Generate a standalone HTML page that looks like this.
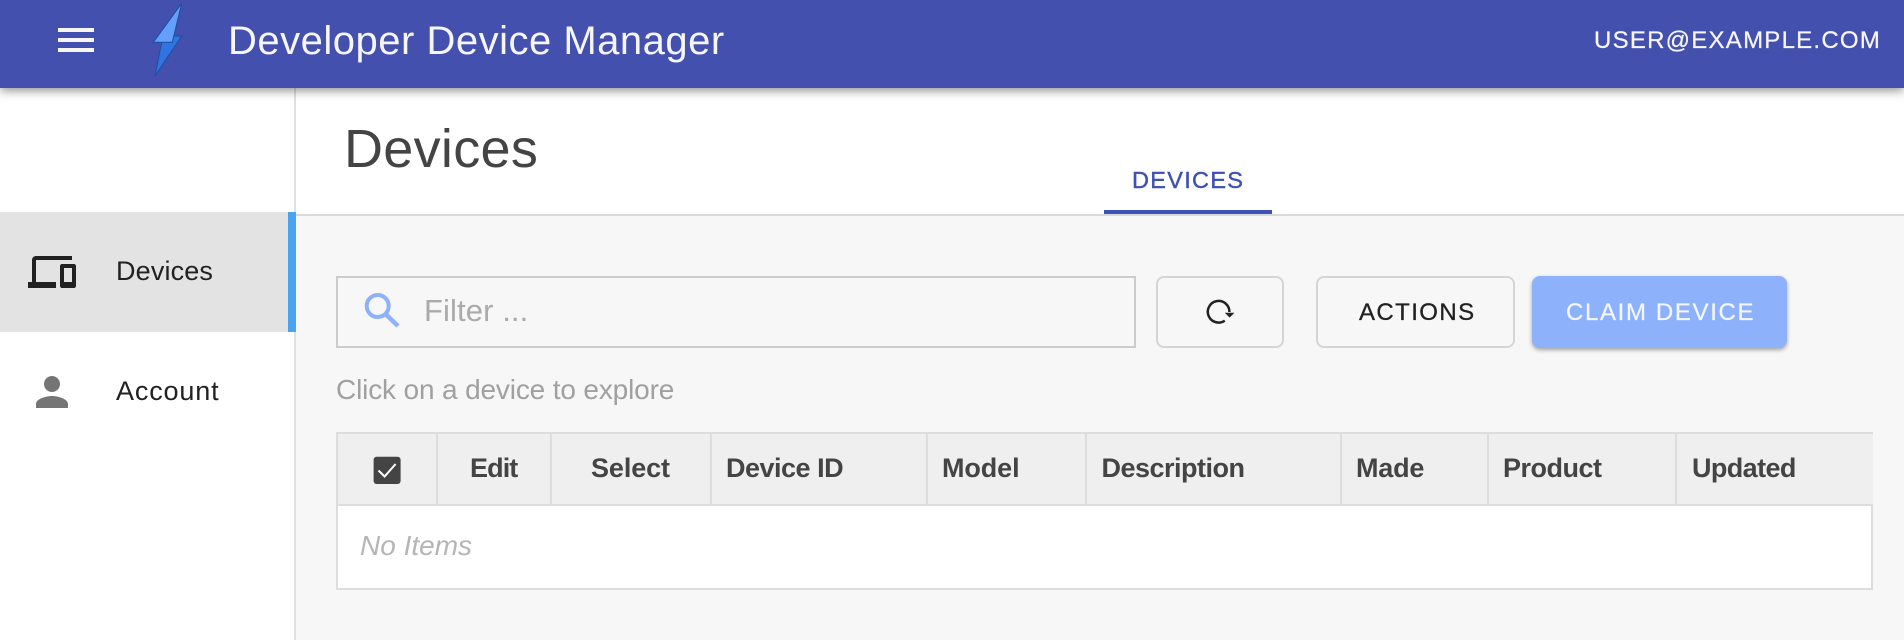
<!DOCTYPE html>
<html lang="en">
<head>
<meta charset="utf-8">
<title>Developer Device Manager</title>
<style>
*{box-sizing:border-box;margin:0;padding:0}
html,body{width:1904px;height:640px;overflow:hidden;background:#fff;font-family:"Liberation Sans",Arial,sans-serif}
.a{position:absolute}
.t{position:absolute;line-height:0;white-space:nowrap}
header{position:absolute;left:0;top:0;width:1904px;height:88px;background:#4450ae;box-shadow:0 3px 9px rgba(0,0,0,.42);z-index:5}
aside{position:absolute;left:0;top:88px;width:296px;height:552px;background:#fff;border-right:2px solid #e0e0e0}
main{position:absolute;left:296px;top:216px;width:1608px;height:424px;background:#f7f7f7}
.hdr{position:absolute;left:296px;top:214px;width:1608px;height:2px;background:#d9d9d9}
.th{position:absolute;top:432px;width:2px;height:72px;background:#ddd}
.h{font-weight:bold;font-size:27px;top:468px;color:#444}
svg{position:absolute;display:block}
</style>
</head>
<body>
<div class="a" style="left:296px;top:88px;width:1608px;height:126px;background:#fff"></div>
<div class="hdr"></div>
<main></main>
<aside></aside>

<header>
  <div class="a" style="left:58px;top:28px;width:36px;height:4px;background:#f7f7fb"></div>
  <div class="a" style="left:58px;top:38px;width:36px;height:4px;background:#f7f7fb"></div>
  <div class="a" style="left:58px;top:48px;width:36px;height:4px;background:#f7f7fb"></div>
  <svg style="left:130px;top:0" width="70" height="88" viewBox="130 0 70 88">
    <path d="M173.3 36H181.7L155 76L161.7 42.3Z" fill="#2f74e0" stroke="#1c4f9e" stroke-width="1"/>
    <path d="M181.7 3.3L153.3 42.3H172.3Z" fill="#64a0fb" stroke="#1c4f9e" stroke-width="1"/>
  </svg>
  <div class="t" style="left:228px;top:40.5px;font-size:40px;letter-spacing:.5px;color:#f5f5fa">Developer Device Manager</div>
  <div class="t" style="left:1594px;top:40.7px;font-size:24px;letter-spacing:1.25px;color:#f5f5fa;-webkit-text-stroke:.25px #f5f5fa">USER@EXAMPLE.COM</div>
</header>

<!-- sidebar -->
<div class="a" style="left:0;top:212px;width:288px;height:120px;background:#e3e3e3"></div>
<div class="a" style="left:288px;top:212px;width:8px;height:120px;background:#4aa3ef"></div>
<svg style="left:28px;top:248px" width="48" height="48" viewBox="0 0 24 24"><path fill="#212121" d="M4 6h18V4H4c-1.1 0-2 .9-2 2v11H0v3h14v-3H4V6zm19 2h-6c-.55 0-1 .45-1 1v10c0 .55.45 1 1 1h6c.55 0 1-.45 1-1V9c0-.55-.45-1-1-1zm-1 9h-4v-7h4v7z"/></svg>
<div class="t" style="left:116px;top:271.2px;font-size:27px;letter-spacing:.15px;color:#212121">Devices</div>
<svg style="left:28px;top:368px" width="48" height="48" viewBox="0 0 24 24"><path fill="#757575" d="M12 12c2.21 0 4-1.79 4-4s-1.79-4-4-4-4 1.79-4 4 1.79 4 4 4zm0 2c-2.67 0-8 1.34-8 4v2h16v-2c0-2.66-5.33-4-8-4z"/></svg>
<div class="t" style="left:116px;top:391.2px;font-size:27px;letter-spacing:.85px;color:#212121">Account</div>

<!-- page head -->
<div class="t" style="left:344px;top:149.4px;font-size:54px;letter-spacing:.3px;color:#444">Devices</div>
<div class="t" style="left:1132px;top:180px;font-size:23.5px;letter-spacing:1.3px;color:#3f51b5;-webkit-text-stroke:.4px #3f51b5">DEVICES</div>
<div class="a" style="left:1104px;top:210px;width:168px;height:4px;background:#3f51b5"></div>

<!-- toolbar -->
<div class="a" style="left:336px;top:276px;width:800px;height:72px;border:2px solid #ccc"></div>
<svg style="left:356px;top:286px" width="50" height="50" viewBox="355 285 50 50">
  <circle cx="376.7" cy="305" r="11" fill="none" stroke="#8db1fb" stroke-width="4"/>
  <path d="M385 313.5L397 325" fill="none" stroke="#8db1fb" stroke-width="4.5"/>
</svg>
<div class="t" style="left:424px;top:311px;font-size:31px;letter-spacing:.1px;color:#aaa">Filter ...</div>

<div class="a" style="left:1156px;top:276px;width:128px;height:72px;border:2px solid #d5d5d5;border-radius:8px"></div>
<svg style="left:1190px;top:290px" width="60" height="45" viewBox="1190 290 60 45">
  <path d="M1229.4 312A10.8 10.8 0 1 0 1224.8 320.6" fill="none" stroke="#222" stroke-width="2.5"/>
  <path d="M1224.8 312.7H1234.4L1229.6 317.6Z" fill="#222"/>
</svg>

<div class="a" style="left:1316px;top:276px;width:199px;height:72px;border:2px solid #d5d5d5;border-radius:8px"></div>
<div class="t" style="left:1359px;top:312.7px;font-size:24px;letter-spacing:1.4px;color:#222;-webkit-text-stroke:.3px #222">ACTIONS</div>

<div class="a" style="left:1532px;top:276px;width:255px;height:72px;background:#8db1fb;border-radius:8px;box-shadow:0 2px 4px rgba(0,0,0,.35)"></div>
<div class="t" style="left:1566px;top:312.7px;font-size:24px;letter-spacing:1.65px;color:#f2f6ff;-webkit-text-stroke:.25px #f2f6ff">CLAIM DEVICE</div>

<div class="t" style="left:336px;top:390px;font-size:28px;letter-spacing:-.15px;color:#a0a0a0">Click on a device to explore</div>

<!-- table -->
<div class="a" style="left:336px;top:432px;width:1537px;height:158px;background:#fff;border:2px solid #ddd"></div>
<div class="a" style="left:338px;top:434px;width:1535px;height:70px;background:#efefef"></div>
<div class="a" style="left:338px;top:504px;width:1535px;height:2px;background:#ddd"></div>
<div class="th" style="left:436px"></div>
<div class="th" style="left:550px"></div>
<div class="th" style="left:710px"></div>
<div class="th" style="left:926px"></div>
<div class="th" style="left:1085px"></div>
<div class="th" style="left:1340px"></div>
<div class="th" style="left:1487px"></div>
<div class="th" style="left:1675px"></div>

<svg style="left:373px;top:456px" width="28" height="29" viewBox="373 456 28 29">
  <rect x="373.6" y="456.8" width="27" height="27.2" rx="3" fill="#444"/>
  <path d="M378.5 470.5L384.6 476.5L395.6 464" fill="none" stroke="#fff" stroke-width="2"/>
</svg>
<div class="t h" style="left:470px;letter-spacing:-.9px">Edit</div>
<div class="t h" style="left:591px;letter-spacing:-.1px">Select</div>
<div class="t h" style="left:726px;letter-spacing:-.5px">Device ID</div>
<div class="t h" style="left:942px;letter-spacing:-.1px">Model</div>
<div class="t h" style="left:1101.5px;letter-spacing:-.5px">Description</div>
<div class="t h" style="left:1356px;letter-spacing:-.2px">Made</div>
<div class="t h" style="left:1503px;letter-spacing:-.5px">Product</div>
<div class="t h" style="left:1692px;letter-spacing:-.6px">Updated</div>
<div class="t" style="left:360px;top:546.3px;font-size:28px;font-style:italic;color:#b5b5b5">No Items</div>
</body>
</html>
